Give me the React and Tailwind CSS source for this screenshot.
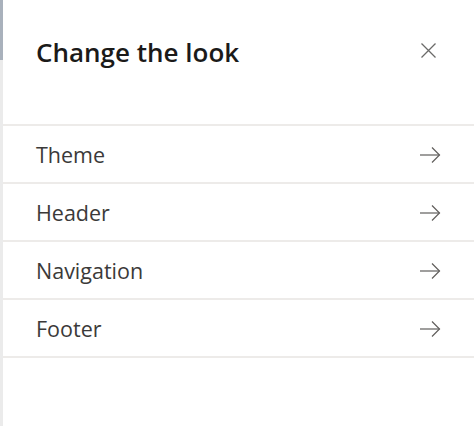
import React from 'react';

const items = ['Theme', 'Header', 'Navigation', 'Footer'];

function ArrowIcon() {
  return (
    <svg width="22" height="18" viewBox="0 0 22 18" fill="none" stroke="#605e5c" strokeWidth="1.2">
      <path d="M1 9H20.5" />
      <path d="M13 1.5L20.5 9L13 16.5" />
    </svg>
  );
}

function CloseIcon() {
  return (
    <svg width="15" height="15" viewBox="0 0 15 15" fill="none" stroke="#6b6a69" strokeWidth="1.3">
      <path d="M0.5 0.5L14.5 14.5M14.5 0.5L0.5 14.5" />
    </svg>
  );
}

export default function App() {
  return (
    <div className="w-[474px] h-[426px] flex bg-white overflow-hidden" style={{ fontFamily: '"Open Sans", "Noto Sans", sans-serif' }}>
      {/* page behind the panel */}
      <div className="w-[3px] flex flex-col">
        <div className="h-[60px] bg-[#a9b1bc]" />
        <div className="flex-1 bg-[#ebebeb]" />
      </div>
      <div className="flex-1 flex flex-col">
        <div className="h-[124px] flex justify-between items-start pl-[33px] pr-[38px] pt-[34px]">
          <h1 className="text-[26px] leading-[36px] font-semibold text-[#1b1a19]">Change the look</h1>
          <button className="mt-[9px] w-[15px] h-[15px] flex items-center justify-center">
            <CloseIcon />
          </button>
        </div>
        <div className="border-t-2 border-[#edebe9]">
          {items.map((item) => (
            <div key={item} className="h-[58px] flex items-center justify-between pl-[33px] pr-[33px] pt-[2px] border-b-2 border-[#edebe9]">
              <span className="text-[21.5px] text-[#3b3a39]">{item}</span>
              <ArrowIcon />
            </div>
          ))}
        </div>
      </div>
    </div>
  );
}
